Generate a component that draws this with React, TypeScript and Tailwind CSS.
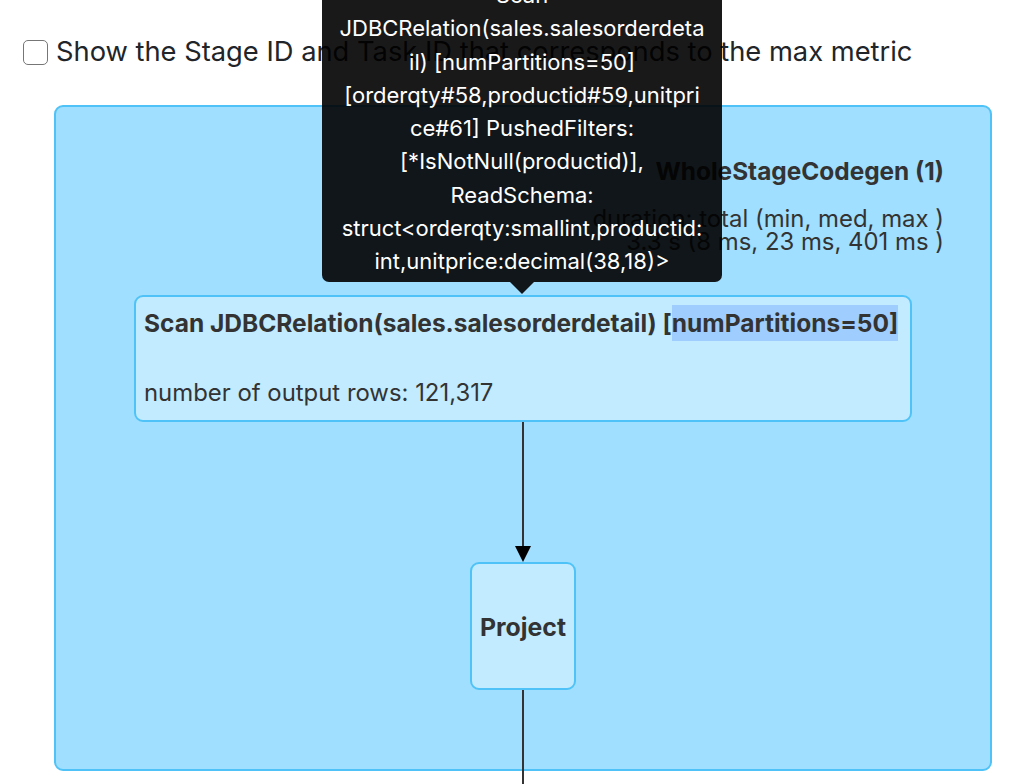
import React from "react";

const tooltipLines = [
  "Scan",
  "JDBCRelation(sales.salesorderdeta",
  "il) [numPartitions=50]",
  "[orderqty#58,productid#59,unitpri",
  "ce#61] PushedFilters:",
  "[*IsNotNull(productid)],",
  "ReadSchema:",
  "struct<orderqty:smallint,productid:",
  "int,unitprice:decimal(38,18)>",
];

function Edge({ height, arrow }: { height: number; arrow?: boolean }) {
  return (
    <svg width="20" height={height} className="block shrink-0" viewBox={`0 0 20 ${height}`}>
      <line x1="10" y1="0" x2="10" y2={arrow ? height - 14 : height} stroke="#333" strokeWidth="2" />
      {arrow && <polygon points={`2,${height - 16} 18,${height - 16} 10,${height}`} fill="#000" />}
    </svg>
  );
}

export default function App() {
  return (
    <div
      className="relative min-h-[784px] bg-white overflow-hidden"
      style={{ fontFamily: "Inter, 'Noto Sans', sans-serif" }}
    >
      <div className="flex items-center pl-[23px] pt-[32px] h-[72px] text-[#212529]">
        <div className="w-[25px] h-[25px] rounded-[5px] border-[1.5px] border-[#767676] bg-white shrink-0" />
        <span className="ml-[8px] text-[27.3px] leading-[40px] whitespace-nowrap">
          Show the Stage ID and Task ID that corresponds to the max metric
        </span>
      </div>

      <div className="mt-[33px] ml-[54px] w-[938px] h-[666px] rounded-[9px] border-2 border-[#4fc3f7] bg-[#a0dfff] flex flex-col items-center text-[#333]">
        <div className="self-stretch flex flex-col items-end pr-[46px] pt-[50px]">
          <div className="text-[24.4px] font-bold leading-[28px] whitespace-nowrap">WholeStageCodegen (1)</div>
          <div className="mt-[22px] text-[23.9px] leading-[23px] text-right whitespace-nowrap">
            <div>duration: total (min, med, max )</div>
            <div>3.3 s (8 ms, 23 ms, 401 ms )</div>
          </div>
        </div>

        <div className="mt-[42px] w-[778px] h-[127px] rounded-[9px] border-2 border-[#4fc3f7] bg-[#c2ebff] pl-[8px] pt-[8px] shrink-0">
          <div className="text-[24.5px] font-bold leading-[36px] whitespace-nowrap">
            Scan JDBCRelation(sales.salesorderdetail) [
            <span className="inline-block bg-[#9fcdfd]">numPartitions=50]</span>
          </div>
          <div className="mt-[35px] text-[23.9px] leading-[34px] whitespace-nowrap">number of output rows: 121,317</div>
        </div>

        <Edge height={140} arrow />

        <div className="w-[106px] h-[128px] rounded-[9px] border-2 border-[#4fc3f7] bg-[#c2ebff] flex items-center justify-center pt-[4px] shrink-0">
          <span className="text-[24.8px] font-bold">Project</span>
        </div>

        <div className="relative z-10 -mb-[40px]">
          <Edge height={120} />
        </div>
      </div>

      <div className="absolute left-[322px] top-[-25px] w-[400px] rounded-[7px] bg-black/90 py-[4px] text-white text-center text-[22px] leading-[33.25px]">
        {tooltipLines.map((l, i) => (
          <div key={i} className="whitespace-nowrap">{l}</div>
        ))}
        <svg width="24" height="12" viewBox="0 0 24 12" className="absolute left-[188px] top-full block">
          <polygon points="0,0 24,0 12,12" fill="rgba(0,0,0,0.9)" />
        </svg>
      </div>
    </div>
  );
}
